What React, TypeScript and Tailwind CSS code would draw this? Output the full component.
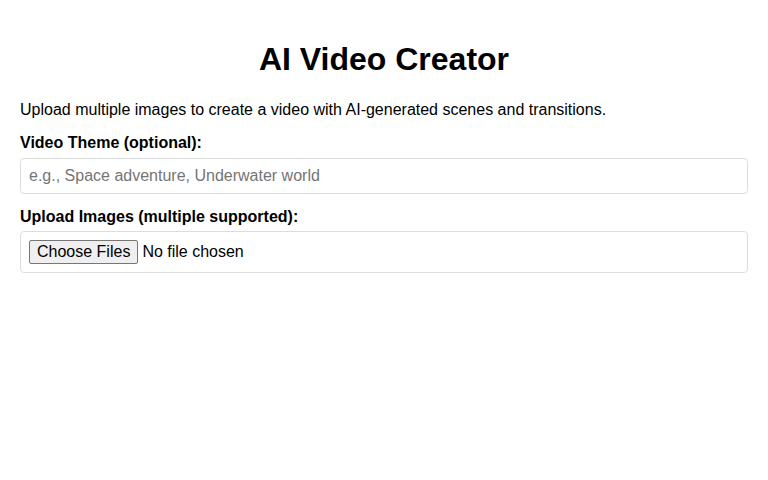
import React from 'react';

const App: React.FC = () => {
    return (
        <div className="min-h-screen bg-white p-5 font-['Liberation_Sans',Arial,sans-serif] text-black">
            <h1 className="mt-[21px] mb-[23px] text-center text-[32px] font-bold leading-[37px]">AI Video Creator</h1>

            <p className="mb-[15px] text-base leading-[18px]">
                Upload multiple images to create a video with AI-generated scenes and transitions.
            </p>

            {/* Theme */}
            <label className="mb-[6px] block text-base font-bold leading-[18px]">Video Theme (optional):</label>
            <input
                type="text"
                placeholder="e.g., Space adventure, Underwater world"
                className="mb-[14px] block h-9 w-full rounded border border-[#dddddd] px-2 text-base placeholder:text-[#757575] focus:outline-none"
            />

            {/* Images */}
            <label className="mb-[5px] block text-base font-bold leading-[18px]">Upload Images (multiple supported):</label>
            <input
                type="file"
                multiple
                accept="image/*"
                className="block h-[42px] w-full rounded border border-[#dddddd] px-2 py-2 text-base leading-[18px] file:mr-[4px] file:h-6 file:rounded-[2px] file:border file:border-solid file:border-[#767676] file:bg-[#efefef] file:px-[7px] file:py-0 file:text-base file:leading-[18px] file:text-black"
            />
        </div>
    );
};

export default App;
